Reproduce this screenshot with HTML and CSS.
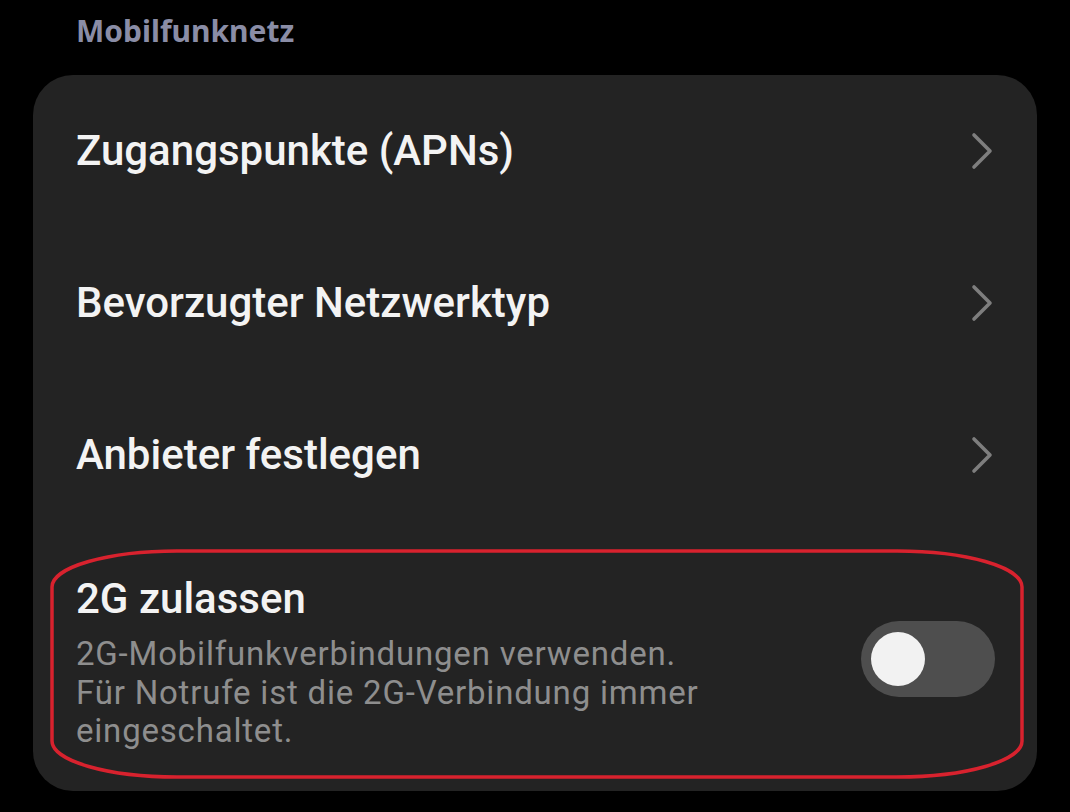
FILE: index.html
```html
<!DOCTYPE html>
<html lang="de">
<head>
<meta charset="utf-8">
<title>Mobilfunknetz</title>
<link rel="stylesheet" href="styles.css">
</head>
<body>
<div class="screen">
  <h2 class="section-title">Mobilfunknetz</h2>
  <div class="card">
    <div class="row nav-row">
      <span class="row-title">Zugangspunkte (APNs)</span>
      <svg class="chevron" width="22" height="38" viewBox="0 0 22 38"><path d="M3 3 L19 19 L3 35" fill="none" stroke="#7e7e7e" stroke-width="3.6" stroke-linecap="round" stroke-linejoin="round"/></svg>
    </div>
    <div class="row nav-row">
      <span class="row-title">Bevorzugter Netzwerktyp</span>
      <svg class="chevron" width="22" height="38" viewBox="0 0 22 38"><path d="M3 3 L19 19 L3 35" fill="none" stroke="#7e7e7e" stroke-width="3.6" stroke-linecap="round" stroke-linejoin="round"/></svg>
    </div>
    <div class="row nav-row">
      <span class="row-title">Anbieter festlegen</span>
      <svg class="chevron" width="22" height="38" viewBox="0 0 22 38"><path d="M3 3 L19 19 L3 35" fill="none" stroke="#7e7e7e" stroke-width="3.6" stroke-linecap="round" stroke-linejoin="round"/></svg>
    </div>
    <div class="row toggle-row">
      <div class="toggle-text">
        <div class="row-title">2G zulassen</div>
        <div class="row-sub">2G-Mobilfunkverbindungen verwenden. Für Notrufe ist die 2G-Verbindung immer eingeschaltet.</div>
      </div>
      <div class="switch"><div class="knob"></div></div>
      <svg class="highlight" width="976" height="232" viewBox="0 0 976 232"><rect x="3" y="3" width="970" height="226" rx="125" ry="36" fill="none" stroke="#d8222e" stroke-width="3.5"/></svg>
    </div>
  </div>
</div>
</body>
</html>
```
FILE: styles.css
```css
html, body {
  margin: 0;
  padding: 0;
  background: #000;
}
.screen {
  width: 1070px;
  height: 812px;
  overflow: hidden;
  font-family: Roboto, "Liberation Sans", sans-serif;
}
.section-title {
  margin: 0;
  height: 75px;
  box-sizing: border-box;
  padding: 10px 0 0 76px;
  font-family: "Noto Sans", Roboto, sans-serif;
  font-weight: 700;
  font-size: 30px;
  line-height: 42px;
  color: #8a8da6;
}
.card {
  margin-left: 33px;
  width: 1004px;
  height: 716px;
  background: #232323;
  border-radius: 40px;
  padding: 0 42px 0 43px;
  box-sizing: border-box;
  display: flex;
  flex-direction: column;
}
.row {
  display: flex;
  align-items: center;
  justify-content: space-between;
}
.nav-row {
  height: 152px;
  padding-right: 2px;
}
.row-title {
  font-size: 42px;
  font-weight: 500;
  color: #f3f3f3;
  line-height: 48px;
}
.chevron {
  display: block;
}
.toggle-row {
  position: relative;
  height: 258px;
  align-items: flex-start;
}
.toggle-text {
  padding-top: 44px;
  width: 640px;
}
.row-sub {
  margin-top: 12px;
  font-size: 33px;
  letter-spacing: 0.8px;
  line-height: 38.5px;
  color: #8e8e8e;
}
.switch {
  margin-top: 90px;
  width: 134px;
  height: 76px;
  border-radius: 38px;
  background: #4e4e4e;
  box-sizing: border-box;
  padding: 11px 0 0 10px;
}
.knob {
  width: 54px;
  height: 54px;
  border-radius: 50%;
  background: #f2f2f2;
}
.highlight {
  position: absolute;
  left: -27px;
  top: 17px;
}
```
